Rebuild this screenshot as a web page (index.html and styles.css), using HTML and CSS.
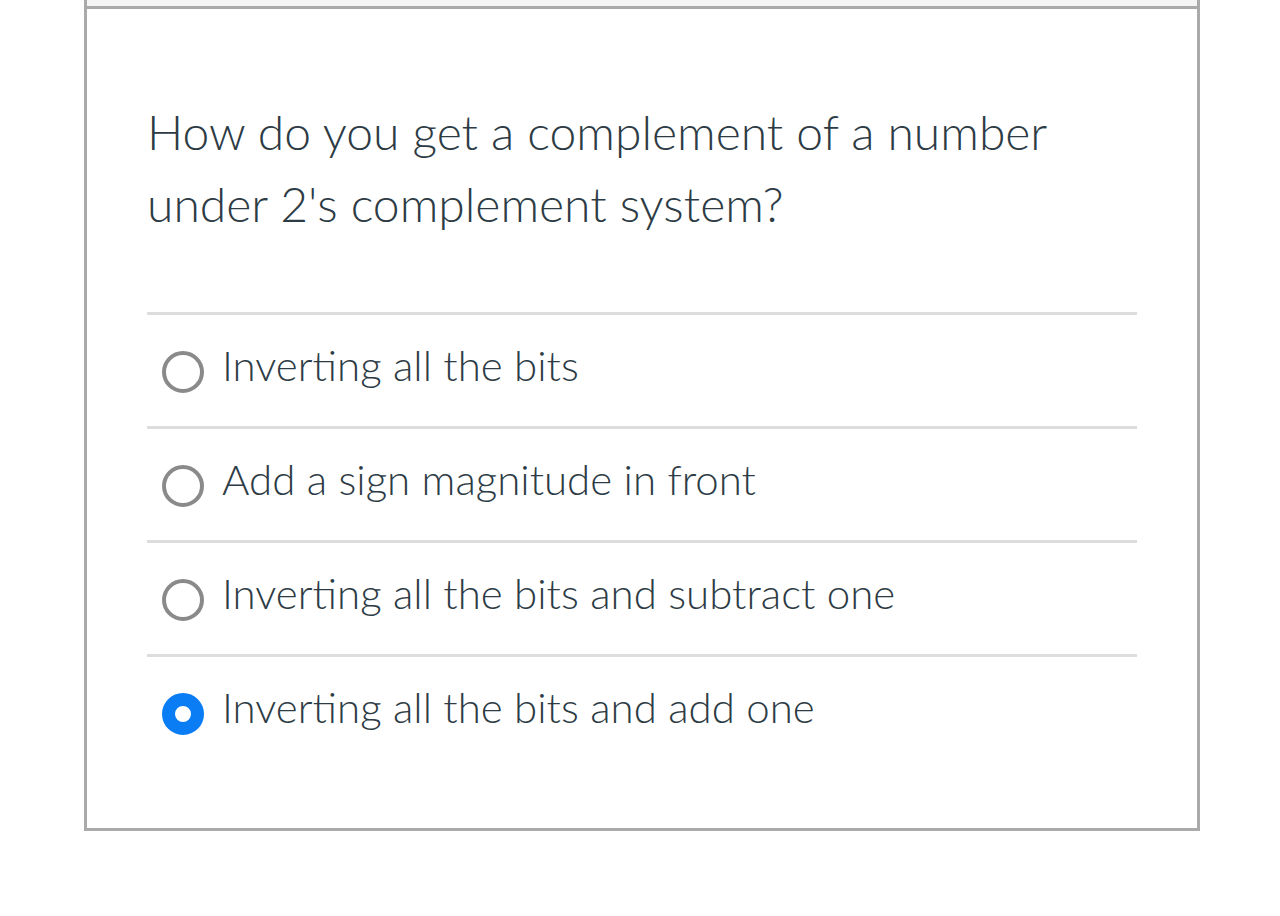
FILE: index.html
```html
<!DOCTYPE html>
<html>
<head>
<meta charset="utf-8">
<link rel="stylesheet" href="styles.css">
</head>
<body>
<div class="question">
  <div class="question-top"></div>
  <div class="question-body">
    <div class="question-text">How do you get a complement of a number under 2's complement system?</div>
    <div class="answers">
      <label class="answer"><span class="radio"></span><span class="answer-text">Inverting all the bits</span></label>
      <label class="answer"><span class="radio"></span><span class="answer-text">Add a sign magnitude in front</span></label>
      <label class="answer"><span class="radio"></span><span class="answer-text">Inverting all the bits and subtract one</span></label>
      <label class="answer"><span class="radio checked"></span><span class="answer-text">Inverting all the bits and add one</span></label>
    </div>
  </div>
</div>
</body>
</html>
```

FILE: styles.css
```css
html, body {
  margin: 0;
  padding: 0;
  background: #ffffff;
}

body {
  font-family: Lato, "Open Sans", sans-serif;
  color: #2d3b45;
}

.question {
  margin-left: 84px;
  width: 1116px;
  box-sizing: border-box;
  border-left: 3px solid #aaaaaa;
  border-right: 3px solid #aaaaaa;
  border-bottom: 3px solid #aaaaaa;
}

.question-top {
  height: 6px;
  background: #f5f5f5;
  border-bottom: 3px solid #aaaaaa;
}

.question-body {
  padding: 87px 60px 60px 60px;
}

.question-text {
  font-size: 48px;
  font-weight: 300;
  line-height: 72px;
  padding-right: 40px;
}

.answers {
  margin-top: 72px;
}

.answer {
  display: flex;
  align-items: center;
  gap: 18px;
  height: 111px;
  border-top: 3px solid #dddddd;
  padding-left: 15px;
  box-sizing: content-box;
}

.radio {
  width: 42px;
  height: 42px;
  box-sizing: border-box;
  border: 4px solid #8a8a8a;
  border-radius: 50%;
  flex: none;
  margin-top: 3px;
}

.radio.checked {
  border: 13px solid #0a7cf4;
  background: #ffffff;
}

.answer-text {
  font-size: 42px;
  font-weight: 300;
  line-height: 50px;
  margin-bottom: 12px;
}
```
